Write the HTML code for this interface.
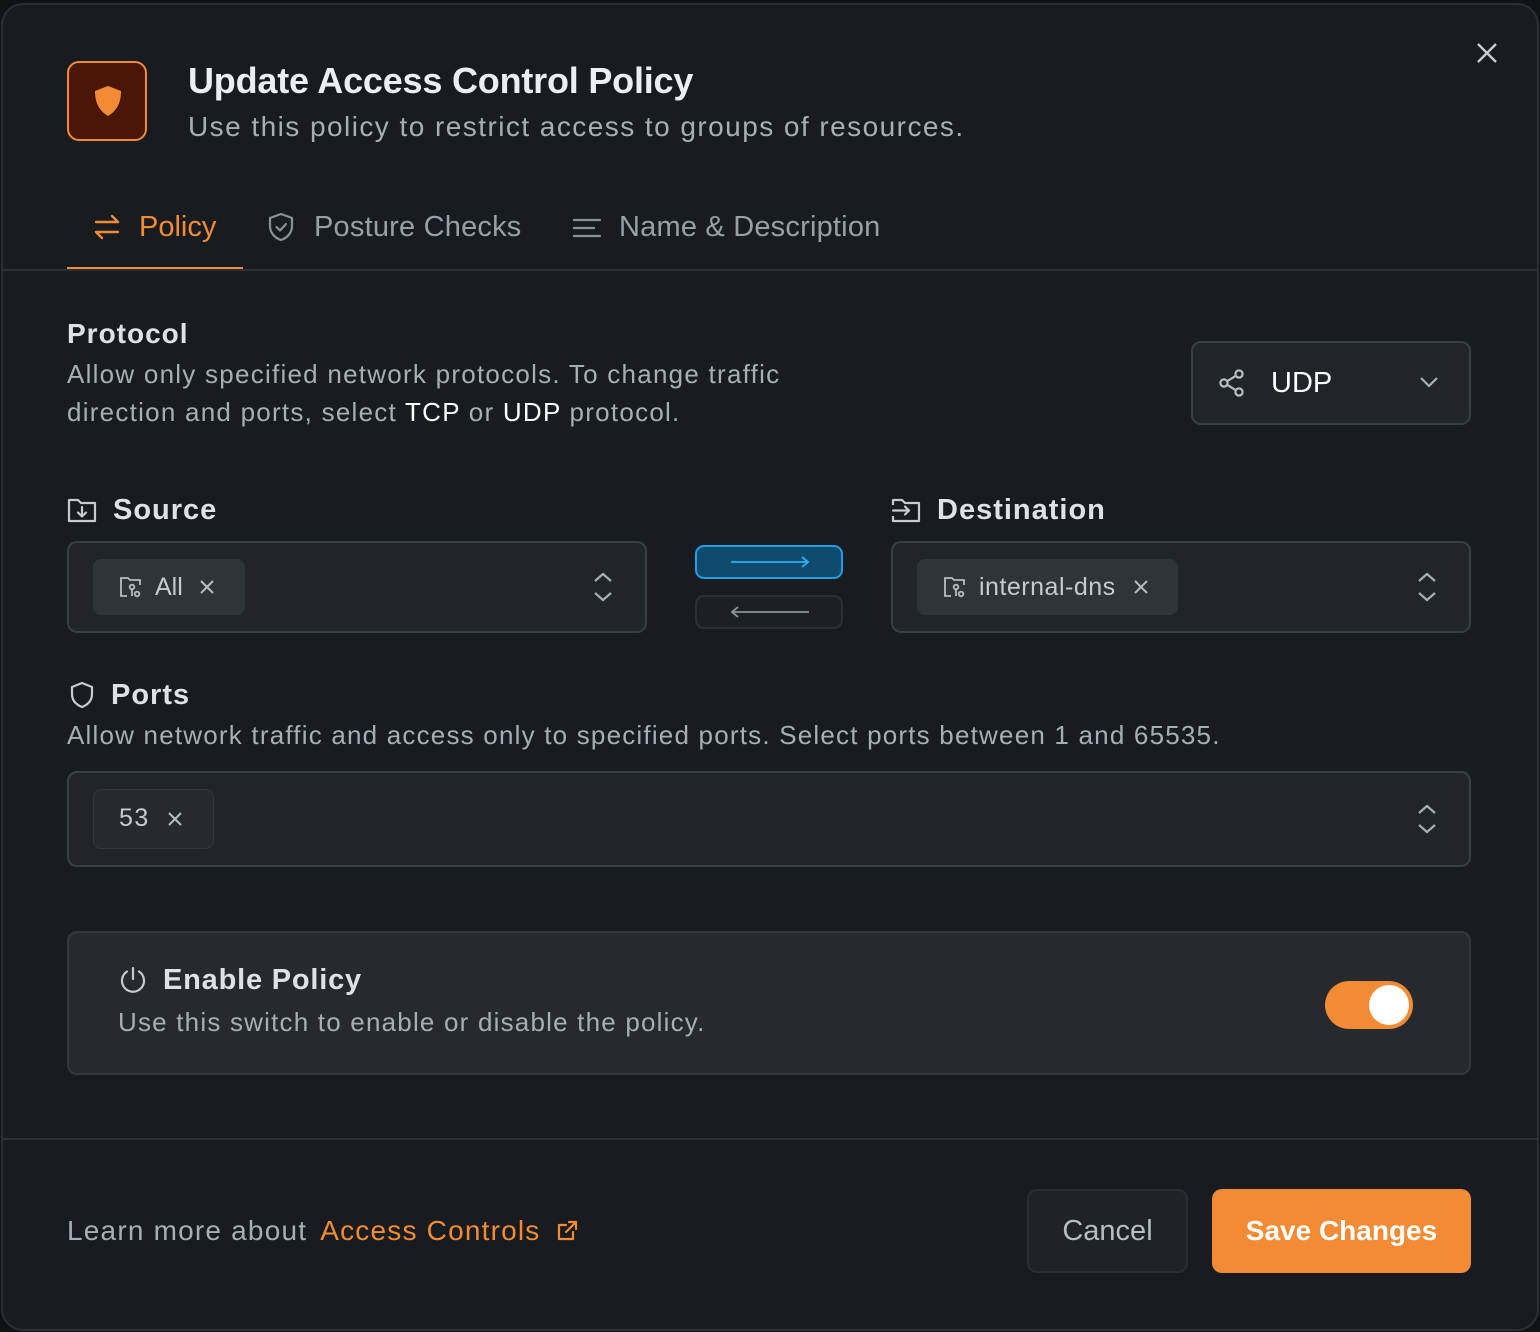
<!DOCTYPE html>
<html><head><meta charset="utf-8"><style>
*{box-sizing:border-box;margin:0;padding:0}
body{width:1540px;height:1332px;background:#101215;font-family:"Liberation Sans",sans-serif;overflow:hidden;position:relative}
.modal{position:absolute;left:1px;top:3px;width:1538px;height:1328px;background:#181b1f;border:2px solid #2c3036;border-radius:22px}
.a{position:absolute;white-space:nowrap}
.box{position:absolute;background:#212428;border:2px solid #3a3e45;border-radius:10px}
.chip{position:absolute;background:#2f333a;border-radius:8px;color:#c7cad0;font-size:25px}
.g{color:#a9adb5}
svg{position:absolute}
</style></head><body>
<div class="modal"></div>
<div class="a" style="left:67px;top:61px;width:80px;height:80px;background:#4a1707;border:2px solid #f28b34;border-radius:12px"></div>
<svg style="left:92px;top:84px" width="32" height="34" viewBox="0 0 32 34"><path d="M16 2 L29 7 C29 20 24 27 16 32 C8 27 3 20 3 7 Z" fill="#f28b34"/></svg>
<div class="a" style="left:188px;top:60px;font-size:36px;font-weight:bold;color:#eceef1;letter-spacing:-0.2px">Update Access Control Policy</div>
<div class="a g" style="left:188px;top:111px;font-size:28px;letter-spacing:1.45px">Use this policy to restrict access to groups of resources.</div>
<svg style="left:1476px;top:42px" width="22" height="22" viewBox="0 0 22 22"><path d="M2 2L20 20M20 2L2 20" stroke="#c7cad0" stroke-width="2.4"/></svg>

<svg style="left:93px;top:213px" width="28" height="28" viewBox="0 0 28 28" fill="none" stroke="#f28b34" stroke-width="2.4" stroke-linecap="round" stroke-linejoin="round"><path d="M3 9H25M19 3L25 9M25 19H3M9 25L3 19"/></svg>
<div class="a" style="left:139px;top:211px;font-size:29px;color:#f28b34">Policy</div>
<div class="a" style="left:67px;top:267px;width:176px;height:3px;background:#f28b34"></div>
<svg style="left:267px;top:212px" width="28" height="30" viewBox="0 0 28 30" fill="none" stroke="#8c9199" stroke-width="2.2" stroke-linejoin="round"><path d="M14 2L25 6V14C25 21 20 26 14 28C8 26 3 21 3 14V6Z"/><path d="M9.5 15L13 18.5L19 12" stroke-linecap="round"/></svg>
<div class="a" style="left:314px;top:211px;font-size:29px;color:#9a9fa7;letter-spacing:0.2px">Posture Checks</div>
<svg style="left:572px;top:217px" width="30" height="22" viewBox="0 0 30 22" stroke="#8c9199" stroke-width="2.2" stroke-linecap="round"><path d="M2 3H28M2 11H22M2 19H28"/></svg>
<div class="a" style="left:619px;top:211px;font-size:29px;color:#9a9fa7;letter-spacing:0.2px">Name &amp; Description</div>
<div class="a" style="left:3px;top:269px;width:1534px;height:2px;background:#2c3036"></div>

<div class="a" style="left:67px;top:318px;font-size:28px;font-weight:bold;color:#dfe1e5;letter-spacing:1px">Protocol</div>
<div class="a g" style="left:67px;top:355px;font-size:26px;line-height:38px;letter-spacing:1.25px">Allow only specified network protocols. To change traffic<br>direction and ports, select <span style="color:#fff">TCP</span> or <span style="color:#fff">UDP</span> protocol.</div>
<div class="box" style="left:1191px;top:341px;width:280px;height:84px"></div>
<svg style="left:1218px;top:368px" width="28" height="30" viewBox="0 0 28 30" fill="none" stroke="#b8bcc3" stroke-width="2.2"><circle cx="21" cy="6" r="3.6"/><circle cx="6" cy="15" r="3.6"/><circle cx="21" cy="24" r="3.6"/><path d="M9.2 13.2L17.8 7.8M9.2 16.8L17.8 22.2"/></svg>
<div class="a" style="left:1271px;top:367px;font-size:29px;color:#fff">UDP</div>
<svg style="left:1418px;top:375px" width="22" height="14" viewBox="0 0 22 14" fill="none" stroke="#a9adb5" stroke-width="2.2"><path d="M3 3L11 11L19 3"/></svg>

<svg style="left:67px;top:496px" width="30" height="28" viewBox="0 0 30 28" fill="none" stroke="#c7cad0" stroke-width="2.2" stroke-linejoin="round"><path d="M2 4H11L14 7H28V25H2Z"/><path d="M15 11V20M11 16.5L15 20.5L19 16.5" stroke-linecap="round"/></svg>
<div class="a" style="left:113px;top:494px;font-size:29px;font-weight:bold;color:#dfe1e5;letter-spacing:1px">Source</div>
<svg style="left:891px;top:496px" width="30" height="28" viewBox="0 0 30 28" fill="none" stroke="#c7cad0" stroke-width="2.2" stroke-linejoin="round"><path d="M2 9V4H11L14 7H28V25H2V20"/><path d="M2 14.5H18M14 10.5L18 14.5L14 18.5" stroke-linecap="round"/></svg>
<div class="a" style="left:937px;top:494px;font-size:29px;font-weight:bold;color:#dfe1e5;letter-spacing:1px">Destination</div>

<div class="box" style="left:67px;top:541px;width:580px;height:92px"></div>
<div class="chip" style="left:93px;top:559px;width:152px;height:56px"></div>
<svg style="left:119px;top:575px" width="26" height="24" viewBox="0 0 26 24" fill="none" stroke="#b8bcc3" stroke-width="1.8"><path d="M8 21H2V3H9L11 5H21V10"/><circle cx="13" cy="12" r="2.3"/><circle cx="18" cy="19" r="2.3"/><path d="M13 14.3V21"/></svg>
<div class="a" style="left:155px;top:573px;font-size:25px;color:#c7cad0">All</div>
<svg style="left:199px;top:579px" width="16" height="16" viewBox="0 0 16 16" stroke="#b8bcc3" stroke-width="2"><path d="M2 2L14 14M14 2L2 14"/></svg>
<svg style="left:592px;top:571px" width="22" height="32" viewBox="0 0 22 32" fill="none" stroke="#a9adb5" stroke-width="2.2"><path d="M3 10L11 3L19 10M3 22L11 29L19 22"/></svg>

<div class="a" style="left:695px;top:545px;width:148px;height:34px;background:#0d4a6e;border:2px solid #1ea0e6;border-radius:9px"></div>
<svg style="left:730px;top:555px" width="80" height="14" viewBox="0 0 80 14" fill="none" stroke="#2ab0f0" stroke-width="1.8"><path d="M1 7H78M72 2L78 7L72 12"/></svg>
<div class="a" style="left:695px;top:595px;width:148px;height:34px;background:#1c1f23;border:2px solid #2c3036;border-radius:9px"></div>
<svg style="left:730px;top:605px" width="80" height="14" viewBox="0 0 80 14" fill="none" stroke="#8c9199" stroke-width="1.8"><path d="M79 7H2M8 2L2 7L8 12"/></svg>

<div class="box" style="left:891px;top:541px;width:580px;height:92px"></div>
<div class="chip" style="left:917px;top:559px;width:261px;height:56px"></div>
<svg style="left:943px;top:575px" width="26" height="24" viewBox="0 0 26 24" fill="none" stroke="#b8bcc3" stroke-width="1.8"><path d="M8 21H2V3H9L11 5H21V10"/><circle cx="13" cy="12" r="2.3"/><circle cx="18" cy="19" r="2.3"/><path d="M13 14.3V21"/></svg>
<div class="a" style="left:979px;top:573px;font-size:25px;color:#c7cad0;letter-spacing:0.5px">internal-dns</div>
<svg style="left:1133px;top:579px" width="16" height="16" viewBox="0 0 16 16" stroke="#b8bcc3" stroke-width="2"><path d="M2 2L14 14M14 2L2 14"/></svg>
<svg style="left:1416px;top:571px" width="22" height="32" viewBox="0 0 22 32" fill="none" stroke="#a9adb5" stroke-width="2.2"><path d="M3 10L11 3L19 10M3 22L11 29L19 22"/></svg>

<svg style="left:69px;top:681px" width="26" height="28" viewBox="0 0 26 28" fill="none" stroke="#c7cad0" stroke-width="2.2" stroke-linejoin="round"><path d="M13 2L23 6V13C23 20 18 24 13 26C8 24 3 20 3 13V6Z"/></svg>
<div class="a" style="left:111px;top:679px;font-size:29px;font-weight:bold;color:#dfe1e5;letter-spacing:1px">Ports</div>
<div class="a g" style="left:67px;top:720px;font-size:26px;letter-spacing:1.2px">Allow network traffic and access only to specified ports. Select ports between 1 and 65535.</div>
<div class="box" style="left:67px;top:771px;width:1404px;height:96px"></div>
<div class="chip" style="left:93px;top:789px;width:121px;height:60px;background:#262a2f;border:1px solid #33373d"></div>
<div class="a" style="left:119px;top:804px;font-size:25px;color:#c7cad0;letter-spacing:1.5px">53</div>
<svg style="left:167px;top:811px" width="16" height="16" viewBox="0 0 16 16" stroke="#b8bcc3" stroke-width="2"><path d="M2 2L14 14M14 2L2 14"/></svg>
<svg style="left:1416px;top:803px" width="22" height="32" viewBox="0 0 22 32" fill="none" stroke="#a9adb5" stroke-width="2.2"><path d="M3 10L11 3L19 10M3 22L11 29L19 22"/></svg>

<div class="box" style="left:67px;top:931px;width:1404px;height:144px;background:#26292e;border-color:#34383e"></div>
<svg style="left:118px;top:965px" width="30" height="30" viewBox="0 0 30 30" fill="none" stroke="#c7cad0" stroke-width="2.2" stroke-linecap="round"><path d="M15 3V14M9 6.5A11 11 0 1 0 21 6.5"/></svg>
<div class="a" style="left:163px;top:964px;font-size:29px;font-weight:bold;color:#dfe1e5;letter-spacing:0.8px">Enable Policy</div>
<div class="a g" style="left:118px;top:1007px;font-size:26px;letter-spacing:1.2px">Use this switch to enable or disable the policy.</div>
<div class="a" style="left:1325px;top:981px;width:88px;height:48px;background:#f28b34;border-radius:24px"></div>
<div class="a" style="left:1369px;top:985px;width:40px;height:40px;background:#fff;border-radius:50%"></div>

<div class="a" style="left:3px;top:1138px;width:1534px;height:2px;background:#2c3036"></div>
<div class="a" style="left:67px;top:1215px;font-size:28px;color:#a9adb5;letter-spacing:1.2px">Learn more about <span style="color:#f28b34;margin-left:4px">Access Controls</span></div>
<svg style="left:555px;top:1219px" width="24" height="24" viewBox="0 0 24 24" fill="none" stroke="#f28b34" stroke-width="2.2" stroke-linecap="round" stroke-linejoin="round"><path d="M18 13V20H4V6H11M14 3H21V10M21 3L11 13"/></svg>
<div class="a" style="left:1027px;top:1189px;width:161px;height:84px;background:#1f2226;border:2px solid #2a2e33;border-radius:10px;color:#b8bcc3;font-size:29px;text-align:center;line-height:80px">Cancel</div>
<div class="a" style="left:1212px;top:1189px;width:259px;height:84px;background:#f28b34;border-radius:10px;color:#fff;font-size:28px;font-weight:bold;text-align:center;line-height:84px">Save Changes</div>
</body></html>
